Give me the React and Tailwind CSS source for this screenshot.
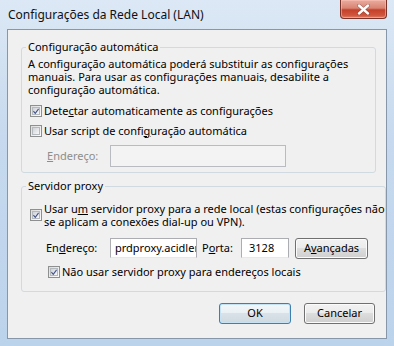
import React from "react";

function Check({ checked }) {
  return (
    <div className="w-[12px] h-[12px] shrink-0 border border-[#8e8f8f] bg-[linear-gradient(135deg,#dcdcdc,#fdfdfd)] p-[1px]">
      <div className="w-full h-full border border-[#b4b9be] bg-[linear-gradient(135deg,#ced2d7,#f8f8f8)] flex items-center justify-center">
        {checked && (
          <svg width="9" height="9" viewBox="0 0 9 9" className="block">
            <path d="M1.2 4.6 L3.4 7.2 L7.9 1.2" fill="none" stroke="#41528a" strokeWidth="1.7" strokeLinecap="square" />
          </svg>
        )}
      </div>
    </div>
  );
}

function Btn({ children, def, w }) {
  return (
    <div
      className={
        "h-[21px] rounded-[3px] border flex items-center justify-center " +
        (def
          ? "border-[#3c7fb1] shadow-[inset_0_0_0_1px_#c6e3f5] bg-[linear-gradient(to_bottom,#f1f6f9_0%,#e9f0f4_50%,#d9e2e8_50%,#cfd9e0_100%)]"
          : "border-[#707070] shadow-[inset_0_0_0_1px_#fbfbfb] bg-[linear-gradient(to_bottom,#f2f2f2_0%,#ebebeb_50%,#dddddd_50%,#cfcfcf_100%)]")
      }
      style={{ width: w }}
    >
      {children}
    </div>
  );
}

export default function App() {
  return (
    <div className="w-[394px] h-[346px] flex flex-col overflow-hidden bg-[linear-gradient(to_bottom,#dce8f5,#c6d9ee_40%,#bcd3ec)] font-['Noto_Sans',sans-serif] text-[11px] text-black">
      <div className="h-[29px] flex items-start shrink-0">
        <div className="pl-[8px] pt-[6px] leading-[18px] text-[12px] text-[#111]">
          Configurações da Rede Local (LAN)
        </div>
        <div className="ml-auto mr-[7px] w-[47px] h-[19px] rounded-b-[4px] border border-t-0 border-[#7b3228] bg-[linear-gradient(to_bottom,#e9ac9f_0%,#d98473_45%,#c4402c_55%,#d0563c_85%,#e0806a_100%)] shadow-[inset_0_0_0_1px_rgba(255,200,190,0.5)] flex items-center justify-center">
          <svg width="13" height="11" viewBox="0 0 13 11">
            <path d="M2 1.5 L11 9.5 M11 1.5 L2 9.5" stroke="#5a1a12" strokeWidth="3.6" strokeLinecap="round" opacity="0.45" />
            <path d="M2 1.5 L11 9.5 M11 1.5 L2 9.5" stroke="#ffffff" strokeWidth="2.4" strokeLinecap="round" />
          </svg>
        </div>
      </div>

      <div className="mx-[7px] h-[310px] shrink-0 border border-[#8796a9] bg-[#f0f0f0] flex flex-col">
        <fieldset className="ml-[13px] mr-[10px] mt-[9px] border border-[#d0dae1] rounded-[3px] pl-[4px] pb-[5px]">
          <legend className="px-[2px] leading-[16px]">Configuração automática</legend>
          <div className="pl-[2px] pt-[2px] leading-[13px] whitespace-nowrap">
            <div>A configuração automática poderá substituir as configurações</div>
            <div>manuais. Para usar as configurações manuais, desabilite a</div>
            <div>configuração automática.</div>
          </div>
          <div className="mt-[8px] h-[14px] pl-[4px] flex items-center gap-[2px] whitespace-nowrap">
            <Check checked />
            <span>
              Dete<u>c</u>tar automaticamente as configurações
            </span>
          </div>
          <div className="mt-[6px] h-[14px] pl-[4px] flex items-center gap-[2px] whitespace-nowrap">
            <Check />
            <span>
              Usar script de confi<u>g</u>uração automática
            </span>
          </div>
          <div className="mt-[7px] h-[22px] flex items-center">
            <span className="w-[84px] pl-[21px] text-[#8d8d8d]">
              <u>E</u>ndereço:
            </span>
            <div className="w-[176px] h-[22px] border border-[#b8bcc2] bg-[#f3f3f3]" />
          </div>
        </fieldset>

        <fieldset className="ml-[13px] mr-[10px] mt-[5px] border border-[#d0dae1] rounded-[3px] pl-[4px] pb-[12px]">
          <legend className="px-[2px] leading-[16px]">Servidor proxy</legend>
          <div className="pt-[8px] pl-[4px] flex items-center gap-[2px] whitespace-nowrap">
            <Check checked />
            <div className="leading-[13px]">
              <div>
                Usar u<u>m</u> servidor proxy para a rede local (estas configurações não
              </div>
              <div>se aplicam a conexões dial-up ou VPN).</div>
            </div>
          </div>
          <div className="mt-[10px] h-[20px] flex items-center whitespace-nowrap">
            <span className="w-[84px] pl-[20px]">
              En<u>d</u>ereço:
            </span>
            <div className="w-[87px] h-[20px] border border-[#abadb3] border-b-[#e3e9ef] bg-white pl-[4px] overflow-hidden leading-[18px]">
              prdproxy.acidler
            </div>
            <span className="w-[44px] pl-[5px]">
              P<u>o</u>rta:
            </span>
            <div className="w-[48px] h-[20px] border border-[#abadb3] border-b-[#e3e9ef] bg-white pl-[7px] leading-[18px]">
              3128
            </div>
            <div className="ml-[6px]">
              <Btn w="73px">
                A<u>v</u>ançadas
              </Btn>
            </div>
          </div>
          <div className="mt-[7px] h-[14px] pl-[22px] flex items-center gap-[2px] whitespace-nowrap">
            <Check checked />
            <span>
              Não usar servidor proxy para endereços locais
            </span>
          </div>
        </fieldset>

        <div className="mt-[11px] flex justify-end gap-[13px] pr-[11px]">
          <Btn def w="72px">OK</Btn>
          <Btn w="71px">Cancelar</Btn>
        </div>
      </div>
    </div>
  );
}
